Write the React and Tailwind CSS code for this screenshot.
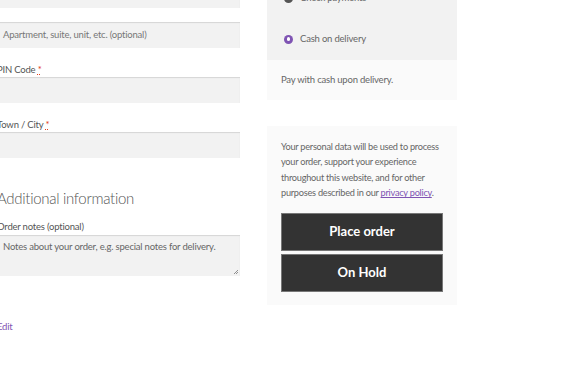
export default function App() {
  const font = { fontFamily: 'Lato, "Noto Sans", sans-serif' };
  return (
    <div className="w-[585px] h-[390px] overflow-hidden bg-white tracking-[-0.2px]" style={font}>
      <div className="flex">
        {/* left column */}
        <div className="w-[243px] -ml-[3px] flex flex-col -mt-[18px]">
          <div className="h-[26px] bg-[#f2f2f2] shadow-[inset_0_1px_1px_rgba(0,0,0,0.12)]" />
          <div className="mt-[14px] h-[26px] bg-[#f2f2f2] shadow-[inset_0_1px_1px_rgba(0,0,0,0.12)] flex items-center px-[6px] text-[9.5px] text-[#777]">
            Apartment, suite, unit, etc. (optional)
          </div>
          <div className="mt-[15px] h-[14px] flex items-center text-[9.5px] text-[#555]">
            PIN Code&nbsp;<span className="text-[#e2401c] underline decoration-dotted">*</span>
          </div>
          <div className="h-[26px] bg-[#f2f2f2] shadow-[inset_0_1px_1px_rgba(0,0,0,0.12)]" />
          <div className="mt-[15px] h-[14px] flex items-center text-[9.5px] text-[#555]">
            Town / City&nbsp;<span className="text-[#e2401c] underline decoration-dotted">*</span>
          </div>
          <div className="h-[26px] bg-[#f2f2f2] shadow-[inset_0_1px_1px_rgba(0,0,0,0.12)]" />
          <div className="mt-[30px] h-[20px] flex items-center text-[15px] tracking-[-0.3px] font-light text-[#555]">
            Additional information
          </div>
          <div className="mt-[12px] h-[14px] flex items-center text-[9.5px] text-[#555]">
            Order notes (optional)
          </div>
          <div className="relative h-[41px] mt-[1px] bg-[#f2f2f2] shadow-[inset_0_1px_1px_rgba(0,0,0,0.12)] px-[6px] pt-[5px] text-[9.5px] text-[#666]">
            Notes about your order, e.g. special notes for delivery.
            <svg className="absolute right-[1px] bottom-[1px]" width="6" height="6" viewBox="0 0 6 6">
              <path d="M1 5 L5 1 M3 5 L5 3" stroke="#777" strokeWidth="0.8" />
            </svg>
          </div>
          <div className="mt-[44px] h-[14px] flex items-center text-[9.5px] text-[#7f54b3]">
            Edit
          </div>
        </div>

        {/* right column */}
        <div className="ml-[27px] w-[190px] flex flex-col -mt-[12px]">
          <div className="bg-[#f2f2f2] flex flex-col px-[17px]">
            <div className="h-[20px] flex items-center gap-[7px] text-[9.5px] text-[#666]">
              <span className="w-[9px] h-[9px] rounded-full bg-[#555]" />
              Check payments
            </div>
            <div className="mt-[21px] mb-[11px] h-[20px] flex items-center gap-[7px] text-[9.5px] text-[#666]">
              <span className="w-[9px] h-[9px] rounded-full bg-[#7f54b3] flex items-center justify-center">
                <span className="w-[3.5px] h-[3.5px] rounded-full bg-white" />
              </span>
              Cash on delivery
            </div>
          </div>
          <div className="bg-[#fafafa] h-[40px] flex items-center px-[14px] text-[9.5px] text-[#666]">
            Pay with cash upon delivery.
          </div>
          <div className="mt-[26px] bg-[#fafafa] px-[14px] pt-[13px] pb-[13px] flex flex-col">
            <p className="text-[9.2px] leading-[15.4px] text-[#666] tracking-[-0.25px]">
              Your personal data will be used to process your order, support your experience throughout this website, and for other purposes described in our{' '}
              <span className="text-[#7f54b3] underline">privacy policy</span>.
            </p>
            <button className="mt-[12px] h-[38px] bg-[#333] border border-[#777] text-white font-bold text-[13px] tracking-normal">
              Place order
            </button>
            <button className="mt-[3px] h-[38px] bg-[#333] border border-[#777] text-white font-bold text-[13px] tracking-normal">
              On Hold
            </button>
          </div>
        </div>
      </div>
    </div>
  );
}
